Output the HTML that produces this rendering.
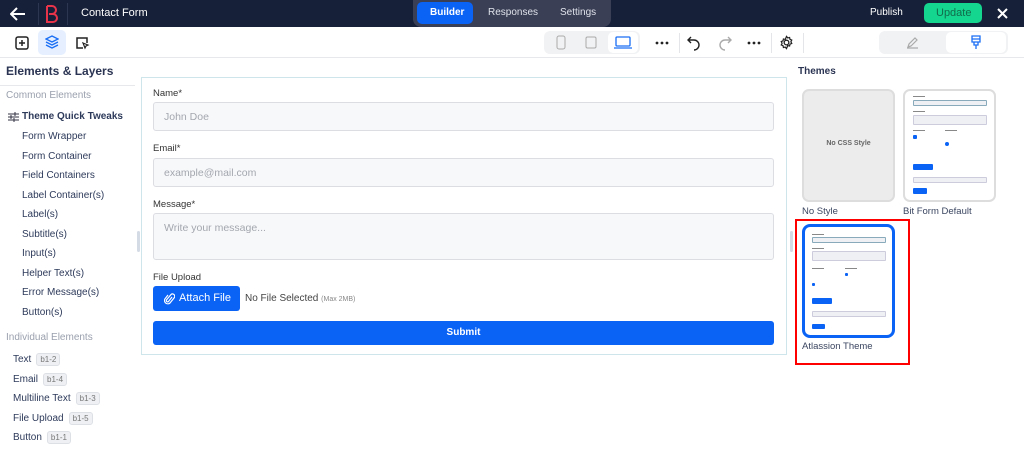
<!DOCTYPE html>
<html><head><meta charset="utf-8"><style>
*{box-sizing:border-box;margin:0;padding:0}
body{width:1024px;height:460px;overflow:hidden;background:#fff;font-family:"Liberation Sans",sans-serif;position:relative;color:#1f2a44}
.a{position:absolute}
.top{left:0;top:0;width:1024px;height:27px;background:#162038}
.t{font-size:11px;white-space:nowrap}
.li{font-size:10px;color:#2d3a5a}
.tag{display:inline-block;font-size:8px;color:#777;background:#eef0f3;border:1px solid #dde0e5;border-radius:3px;padding:0 3px;margin-left:5px;line-height:11px}
.inp{left:153px;width:621px;height:29px;background:#f7f8fa;border:1px solid #dcdde2;border-radius:3px;font-size:10.5px;color:#a3a7ae;padding:8px 0 0 10px}
.lbl{left:153px;font-size:9.5px;color:#333}
.card{border:2px solid #ddd;border-radius:7px;background:#fff;overflow:hidden}
.m{position:absolute;background:#eef0f3;border:1px solid #ccd;border-radius:1px}
.mb{position:absolute;background:#0b63f6;border-radius:1px}
.ml{position:absolute;height:1px;width:12px;background:#888}
</style></head><body>
<div class="a top"></div>
<svg class="a" style="left:10px;top:7px" width="16" height="14" viewBox="0 0 16 14"><path d="M15 7H2M7 1L1 7l6 6" stroke="#fff" stroke-width="2" fill="none"/></svg>
<div class="a" style="left:38px;top:3px;width:1px;height:22px;background:#2c3650"></div>
<div class="a" style="left:67px;top:3px;width:1px;height:22px;background:#2c3650"></div>
<svg class="a" style="left:45px;top:5px" width="14" height="18" viewBox="0 0 14 18"><path d="M2 1v16h6a4 4 0 0 0 0-8H4M2 1h5a4 4 0 0 1 0 8" stroke="#e8344a" stroke-width="2" fill="none"/></svg>
<div class="a t" style="left:81px;top:7px;color:#fff;font-size:11px">Contact Form</div>
<div class="a" style="left:413px;top:0;width:198px;height:27px;background:#3a3f55;border-radius:0 0 8px 8px"></div>
<div class="a" style="left:417px;top:2px;width:56px;height:22px;background:#0b63f6;border-radius:5px"></div>
<div class="a t" style="left:430px;top:7px;color:#fff;font-weight:bold;font-size:10px">Builder</div>
<div class="a t" style="left:488px;top:7px;color:#dfe2ea;font-size:10px">Responses</div>
<div class="a t" style="left:560px;top:7px;color:#dfe2ea;font-size:10px">Settings</div>
<div class="a t" style="left:870px;top:7px;color:#fff;font-size:10px">Publish</div>
<div class="a" style="left:924px;top:3px;width:58px;height:20px;background:#15d68f;border-radius:5px"></div>
<div class="a t" style="left:936px;top:7px;color:#116b4c;font-size:11px">Update</div>
<svg class="a" style="left:997px;top:8px" width="11" height="11"><path d="M1 1l9 9M10 1l-9 9" stroke="#fff" stroke-width="2"/></svg>

<div class="a" style="left:0;top:57px;width:1024px;height:1px;background:#e6e8ec"></div>
<svg class="a" style="left:15px;top:36px" width="14" height="14"><rect x="1" y="1" width="12" height="12" rx="2" stroke="#222" stroke-width="1.5" fill="none"/><path d="M7 4v6M4 7h6" stroke="#222" stroke-width="1.5"/></svg>
<div class="a" style="left:38px;top:30px;width:28px;height:25px;background:#e5efff;border-radius:5px"></div>
<svg class="a" style="left:45px;top:35px" width="14" height="14"><path d="M7 1l6 3-6 3-6-3zM1 7l6 3 6-3M1 10l6 3 6-3" stroke="#1a6ef5" stroke-width="1.3" fill="none"/></svg>
<svg class="a" style="left:75px;top:36px" width="15" height="15"><path d="M8 12H2V2h10v5" stroke="#222" stroke-width="1.5" fill="none"/><path d="M8 7l5 2-2 1-1 2z" stroke="#222" stroke-width="1.2" fill="none"/></svg>

<div class="a" style="left:544px;top:31px;width:96px;height:23px;background:#f1f2f4;border-radius:6px"></div>
<svg class="a" style="left:556px;top:35px" width="10" height="15"><rect x="1" y="1" width="8" height="13" rx="2" stroke="#aaa" fill="none"/></svg>
<svg class="a" style="left:585px;top:36px" width="12" height="13"><rect x="1" y="1" width="10" height="11" rx="1.5" stroke="#aaa" fill="none"/></svg>
<div class="a" style="left:608px;top:32px;width:30px;height:21px;background:#fff;border-radius:5px"></div>
<svg class="a" style="left:613px;top:36px" width="20" height="13"><rect x="3" y="1" width="14" height="9" rx="1" stroke="#1a6ef5" stroke-width="1.3" fill="none"/><path d="M1 12h18" stroke="#1a6ef5" stroke-width="1.3"/></svg>
<svg class="a" style="left:655px;top:41px" width="14" height="4"><circle cx="2" cy="2" r="1.4" fill="#222"/><circle cx="7" cy="2" r="1.4" fill="#222"/><circle cx="12" cy="2" r="1.4" fill="#222"/></svg>
<div class="a" style="left:679px;top:33px;width:1px;height:20px;background:#e3e5e8"></div>
<svg class="a" style="left:687px;top:35px" width="14" height="16"><path d="M4 2L1 5l3 3M1 5h6a5 5 0 0 1 0 10" stroke="#222" stroke-width="1.4" fill="none"/></svg>
<svg class="a" style="left:718px;top:35px" width="14" height="16"><path d="M10 2l3 3-3 3M13 5H7a5 5 0 0 0 0 10" stroke="#aaa" stroke-width="1.4" fill="none"/></svg>
<svg class="a" style="left:747px;top:41px" width="14" height="4"><circle cx="2" cy="2" r="1.4" fill="#222"/><circle cx="7" cy="2" r="1.4" fill="#222"/><circle cx="12" cy="2" r="1.4" fill="#222"/></svg>
<div class="a" style="left:771px;top:33px;width:1px;height:20px;background:#e3e5e8"></div>
<svg class="a" style="left:779px;top:35px" width="15" height="15" viewBox="0 0 16 16"><circle cx="8" cy="8" r="2.5" stroke="#222" stroke-width="1.4" fill="none"/><path d="M8 1.5l1.3 1.6 2-.5.4 2 1.9.8-.9 1.8.9 1.8-1.9.8-.4 2-2-.5L8 14.5l-1.3-1.6-2 .5-.4-2-1.9-.8.9-1.8-.9-1.8 1.9-.8.4-2 2 .5z" stroke="#222" stroke-width="1.3" fill="none"/></svg>
<div class="a" style="left:803px;top:33px;width:1px;height:20px;background:#e3e5e8"></div>
<div class="a" style="left:879px;top:31px;width:129px;height:23px;background:#f1f2f4;border-radius:6px"></div>
<div class="a" style="left:946px;top:32px;width:60px;height:21px;background:#fff;border-radius:5px"></div>
<svg class="a" style="left:906px;top:36px" width="13" height="13"><path d="M2 11l1-3 6-6 2 2-6 6zM1 12h11" stroke="#aaa" stroke-width="1.2" fill="none"/></svg>
<svg class="a" style="left:971px;top:35px" width="10" height="15"><path d="M1 1h8v6H1zM1 4h8M3 7v3h4V7M5 10v4" stroke="#1a6ef5" stroke-width="1.3" fill="none"/></svg>

<div class="a" style="left:6px;top:64px;font-size:12px;font-weight:bold;color:#2b3553">Elements &amp; Layers</div>
<div class="a" style="left:0;top:85px;width:135px;height:1px;background:#e6e8ec"></div>
<div class="a li" style="left:6px;top:90px;color:#9aa0ad">Common Elements</div>
<svg class="a" style="left:8px;top:112px" width="11" height="10"><path d="M0 2h11M0 5h11M0 8h11" stroke="#334" stroke-width="1"/><path d="M7 0v4M3 3v4M6 6v4" stroke="#334"/></svg>
<div class="a li" style="left:22px;top:111px;font-weight:bold">Theme Quick Tweaks</div>
<div class="a li" style="left:22px;top:131px">Form Wrapper</div>
<div class="a li" style="left:22px;top:151px">Form Container</div>
<div class="a li" style="left:22px;top:170px">Field Containers</div>
<div class="a li" style="left:22px;top:190px">Label Container(s)</div>
<div class="a li" style="left:22px;top:209px">Label(s)</div>
<div class="a li" style="left:22px;top:229px">Subtitle(s)</div>
<div class="a li" style="left:22px;top:248px">Input(s)</div>
<div class="a li" style="left:22px;top:268px">Helper Text(s)</div>
<div class="a li" style="left:22px;top:287px">Error Message(s)</div>
<div class="a li" style="left:22px;top:307px">Button(s)</div>
<div class="a li" style="left:6px;top:332px;color:#9aa0ad">Individual Elements</div>
<div class="a li" style="left:13px;top:353px">Text<span class="tag">b1-2</span></div>
<div class="a li" style="left:13px;top:373px">Email<span class="tag">b1-4</span></div>
<div class="a li" style="left:13px;top:392px">Multiline Text<span class="tag">b1-3</span></div>
<div class="a li" style="left:13px;top:412px">File Upload<span class="tag">b1-5</span></div>
<div class="a li" style="left:13px;top:431px">Button<span class="tag">b1-1</span></div>
<div class="a" style="left:137px;top:231px;width:3px;height:21px;background:#d5dbe5;border-radius:2px"></div>
<div class="a" style="left:790px;top:231px;width:3px;height:21px;background:#d5dbe5;border-radius:2px"></div>

<div class="a" style="left:141px;top:77px;width:646px;height:278px;border:1px solid #cfe5ec"></div>
<div class="a lbl" style="left:153px;top:88px">Name*</div>
<div class="a inp" style="top:102px">John Doe</div>
<div class="a lbl" style="top:143px">Email*</div>
<div class="a inp" style="top:158px">example@mail.com</div>
<div class="a lbl" style="top:199px">Message*</div>
<div class="a inp" style="top:213px;height:47px">Write your message...</div>
<div class="a lbl" style="top:272px">File Upload</div>
<div class="a" style="left:153px;top:286px;width:87px;height:25px;background:#0b63f6;border-radius:3px"></div>
<svg class="a" style="left:164px;top:292px" width="11" height="13" viewBox="0 0 11 13"><path d="M8 5L4.5 9.5a1.3 1.3 0 0 1-2-1.6L7 2.5a2.3 2.3 0 0 1 3.4 3L6 11a3.3 3.3 0 0 1-5-4.2L4 3" stroke="#fff" stroke-width="1.2" fill="none"/></svg>
<div class="a" style="left:179px;top:292px;color:#fff;font-size:11px">Attach File</div>
<div class="a" style="left:245px;top:293px;color:#444;font-size:10px">No File Selected <span style="font-size:7px;color:#888">(Max 2MB)</span></div>
<div class="a" style="left:153px;top:321px;width:621px;height:24px;background:#0b63f6;border-radius:3px;color:#fff;font-size:10px;font-weight:bold;text-align:center;line-height:24px">Submit</div>

<div class="a" style="left:798px;top:66px;font-size:10px;font-weight:bold;color:#2b3553">Themes</div>
<div class="a card" style="left:802px;top:89px;width:93px;height:113px;background:#ececec;font-size:7px;font-weight:bold;color:#666;text-align:center;line-height:105px">No CSS Style</div>
<div class="a" style="left:802px;top:206px;font-size:9.5px;color:#3a4560">No Style</div>
<div class="a card" style="left:903px;top:89px;width:93px;height:113px">
 <div class="ml" style="left:8px;top:5px"></div><div class="m" style="left:8px;top:9px;width:74px;height:6px;border-color:#8ab"></div>
 <div class="ml" style="left:8px;top:20px"></div><div class="m" style="left:8px;top:24px;width:74px;height:10px"></div>
 <div class="ml" style="left:8px;top:39px"></div><div class="ml" style="left:40px;top:39px"></div>
 <div class="mb" style="left:8px;top:44px;width:4px;height:4px"></div><div class="mb" style="left:40px;top:51px;width:4px;height:4px;border-radius:2px"></div>
 <div class="mb" style="left:8px;top:73px;width:20px;height:6px"></div>
 <div class="m" style="left:8px;top:86px;width:74px;height:6px"></div>
 <div class="mb" style="left:8px;top:97px;width:14px;height:6px"></div>
</div>
<div class="a" style="left:903px;top:206px;font-size:9.5px;color:#3a4560">Bit Form Default</div>
<div class="a card" style="left:802px;top:224px;width:93px;height:114px;border:3px solid #0b63f6;border-radius:8px">
 <div class="ml" style="left:7px;top:7px"></div><div class="m" style="left:7px;top:10px;width:74px;height:6px;border-color:#8ab"></div>
 <div class="ml" style="left:7px;top:21px"></div><div class="m" style="left:7px;top:24px;width:74px;height:10px"></div>
 <div class="ml" style="left:7px;top:41px"></div><div class="ml" style="left:40px;top:41px"></div>
 <div class="mb" style="left:7px;top:56px;width:3px;height:3px"></div><div class="mb" style="left:40px;top:46px;width:3px;height:3px"></div>
 <div class="mb" style="left:7px;top:71px;width:20px;height:6px"></div>
 <div class="m" style="left:7px;top:84px;width:74px;height:6px"></div>
 <div class="mb" style="left:7px;top:97px;width:13px;height:5px"></div>
</div>
<div class="a" style="left:802px;top:341px;font-size:9.5px;color:#3a4560">Atlassion Theme</div>
<div class="a" style="left:795px;top:219px;width:115px;height:146px;border:2px solid #f00"></div>
</body></html>
